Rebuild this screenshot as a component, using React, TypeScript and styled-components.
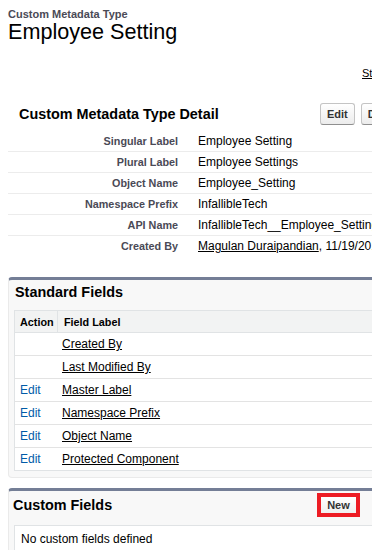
import styled, { createGlobalStyle } from "styled-components";

const GlobalStyle = createGlobalStyle`
  html, body {
    margin: 0;
    padding: 0;
    background: #fff;
    overflow: hidden;
  }
  body {
    font-family: "Liberation Sans", Arial, sans-serif;
    font-size: 12px;
    color: #000;
  }
`;

const DETAILS = [
  { label: "Singular Label", value: "Employee Setting" },
  { label: "Plural Label", value: "Employee Settings" },
  { label: "Object Name", value: "Employee_Setting" },
  { label: "Namespace Prefix", value: "InfallibleTech" },
  { label: "API Name", value: "InfallibleTech__Employee_Setting__mdt" },
];

const STANDARD_FIELDS = [
  { label: "Created By", editable: false },
  { label: "Last Modified By", editable: false },
  { label: "Master Label", editable: true },
  { label: "Namespace Prefix", editable: true },
  { label: "Object Name", editable: true },
  { label: "Protected Component", editable: true },
];

const App = () => {
  return (
    <>
      <GlobalStyle />
      <Page>
        <PageHeader>
          <PageType>Custom Metadata Type</PageType>
          <PageTitle>Employee Setting</PageTitle>
        </PageHeader>

        <Breadcrumb>
          <PlainLink href="#">Standard Fields [6] | Custom Fields [0]</PlainLink>
        </Breadcrumb>

        <DetailBlock>
          <DetailHeader>
            <DetailTitle>Custom Metadata Type Detail</DetailTitle>
            <Buttons>
              <Button>Edit</Button>
              <Button>Delete</Button>
              <Button>Manage Records</Button>
            </Buttons>
          </DetailHeader>
          {DETAILS.map((d) => (
            <DetailRow key={d.label}>
              <Label>{d.label}</Label>
              <Value>{d.value}</Value>
            </DetailRow>
          ))}
          <DetailRow $last>
            <Label>Created By</Label>
            <Value>
              <PlainLink href="#">Magulan Duraipandian</PlainLink>, 11/19/2016 9:43 PM
            </Value>
          </DetailRow>
        </DetailBlock>

        <Panel>
          <PanelHeader>
            <PanelTitle>Standard Fields</PanelTitle>
          </PanelHeader>
          <FieldTable>
            <FieldHead>
              <HeadCell>Action</HeadCell>
              <HeadCell $divider>Field Label</HeadCell>
            </FieldHead>
            {STANDARD_FIELDS.map((f) => (
              <FieldRow key={f.label}>
                <Cell>{f.editable && <ActionLink href="#">Edit</ActionLink>}</Cell>
                <Cell>
                  <PlainLink href="#">{f.label}</PlainLink>
                </Cell>
              </FieldRow>
            ))}
          </FieldTable>
        </Panel>

        <Panel>
          <PanelHeader $compact>
            <PanelTitle>Custom Fields</PanelTitle>
            <Highlight>
              <NewButton>New</NewButton>
            </Highlight>
          </PanelHeader>
          <EmptyBox>No custom fields defined</EmptyBox>
        </Panel>
      </Page>
    </>
  );
};

const Page = styled.div`
  width: 760px;
  padding: 8px 0 0 8px;
`;

const PageHeader = styled.div`
  display: flex;
  flex-direction: column;
`;

const PageType = styled.h2`
  margin: 0;
  font-size: 11px;
  line-height: 12px;
  font-weight: bold;
  color: #4a4a56;
`;

const PageTitle = styled.h1`
  margin: 0;
  font-size: 21.6px;
  line-height: 24px;
  font-weight: normal;
  color: #000;
`;

const Breadcrumb = styled.div`
  margin-top: 22px;
  padding-left: 354px;
  height: 14px;
  font-size: 11px;
  line-height: 14px;
  white-space: nowrap;
`;

const PlainLink = styled.a`
  color: #000;
  text-decoration: underline;
`;

const DetailBlock = styled.div`
  margin-top: 23px;
`;

const DetailHeader = styled.div`
  display: grid;
  grid-template-columns: 312px 1fr;
  align-items: center;
  height: 22px;
  margin-bottom: 6px;
`;

const DetailTitle = styled.h2`
  margin: 0;
  padding-left: 11px;
  font-size: 14.4px;
  font-weight: bold;
  color: #000;
`;

const Buttons = styled.div`
  display: flex;
  gap: 6px;
`;

const Button = styled.button`
  height: 22px;
  padding: 0 6px;
  border: 1px solid #c4c4c4;
  border-bottom-color: #8f8f8f;
  border-radius: 3px;
  background: linear-gradient(#ffffff, #ececec);
  font-family: inherit;
  font-size: 11px;
  font-weight: bold;
  color: #333;
  white-space: nowrap;
`;

const DetailRow = styled.div<{ $last?: boolean }>`
  display: grid;
  grid-template-columns: 170px 1fr;
  height: 20px;
  align-items: center;
  border-bottom: 1px solid ${(p) => (p.$last ? "transparent" : "#ececec")};
`;

const Label = styled.div`
  text-align: right;
  font-size: 10.8px;
  font-weight: bold;
  color: #4a4a56;
`;

const Value = styled.div`
  padding-left: 20px;
  font-size: 12px;
  white-space: nowrap;
`;

const Panel = styled.div`
  margin-top: 20px;
  background: #f8f8f8;
  border: 1px solid #eaeaea;
  border-top: 3px solid #747e96;
  border-radius: 4px;
  padding: 0 0 6px 5px;

  & + & {
    margin-top: 10px;
  }
`;

const PanelHeader = styled.div<{ $compact?: boolean }>`
  display: flex;
  align-items: center;
  gap: 205px;
  height: ${(p) => (p.$compact ? "24px" : "18px")};
  padding: ${(p) => (p.$compact ? "2px 0 8px" : "3px 0 9px 1px")};
  margin-left: ${(p) => (p.$compact ? "-1px" : "0")};
`;

const PanelTitle = styled.h3`
  margin: 0;
  font-size: 14.4px;
  line-height: 18px;
  font-weight: bold;
  color: #000;
`;

const Highlight = styled.div`
  border: 4px solid #ed1c24;
  padding: 0;
  display: flex;
`;

const NewButton = styled.button`
  height: 16px;
  padding: 0 6px;
  border: none;
  background: linear-gradient(#ffffff, #f0f0f0);
  font-family: inherit;
  font-size: 11px;
  font-weight: bold;
  color: #333;
`;

const FieldTable = styled.div`
  border: 1px solid #e0e3e5;
  background: #fff;
`;

const FieldHead = styled.div`
  display: grid;
  grid-template-columns: 42px 1fr;
  height: 21px;
  background: #f2f3f3;
  border-bottom: 1px solid #e0e3e5;
`;

const HeadCell = styled.div<{ $divider?: boolean }>`
  display: flex;
  align-items: center;
  padding-left: ${(p) => (p.$divider ? "6px" : "5px")};
  border-left: ${(p) => (p.$divider ? "1px solid #e0e3e5" : "none")};
  font-size: 10.8px;
  font-weight: bold;
  color: #000;
`;

const FieldRow = styled.div`
  display: grid;
  grid-template-columns: 42px 1fr;
  height: 22px;
  border-bottom: 1px solid #e3e3e3;

  &:last-child {
    border-bottom: none;
  }
`;

const Cell = styled.div`
  display: flex;
  align-items: center;
  padding-left: 5px;
  font-size: 12px;
`;

const ActionLink = styled.a`
  color: #015ba7;
  text-decoration: none;
`;

const EmptyBox = styled.div`
  border: 1px solid #e0e3e5;
  background: #fff;
  padding: 5px 6px;
  font-size: 12px;
  line-height: 16px;
  height: 30px;
`;

export default App;
